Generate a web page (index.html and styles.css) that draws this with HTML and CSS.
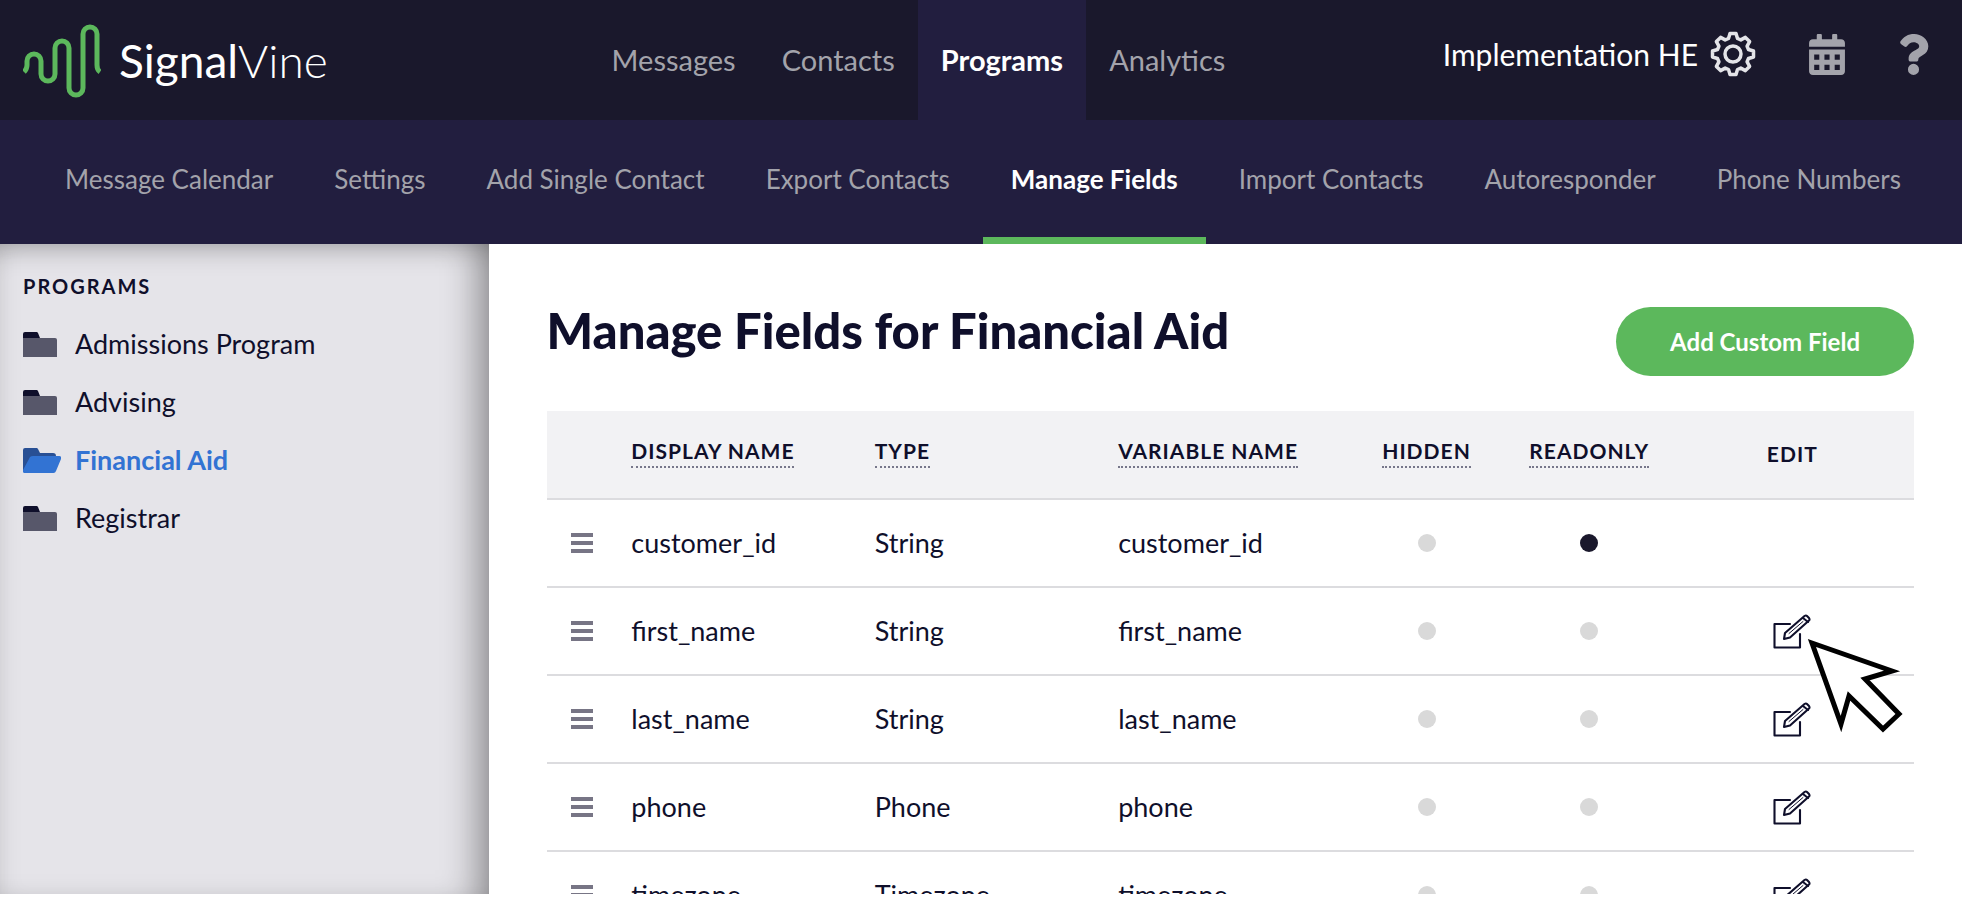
FILE: index.html
```html
<!DOCTYPE html>
<html lang="en">
<head>
  <meta charset="UTF-8" />
  <meta name="viewport" content="width=device-width, initial-scale=1.0"/>
  <title>SignalVine - Manage Fields</title>
  <link rel="stylesheet" href="styles.css">
</head>
<body>

  <!-- shared icons -->
  <svg class="sprite" aria-hidden="true">
    <symbol id="folder" viewBox="0 0 38 25">
      <path d="M0 9V2a2 2 0 0 1 2-2h11a2 2 0 0 1 2 1l2 5v3z" fill="#0f0f2b"/>
      <path d="M0 6h32a2 2 0 0 1 2 2v17H0z" fill="#57576a"/>
    </symbol>
    <symbol id="folder-open" viewBox="0 0 38 25">
      <path d="M0 23V2a2 2 0 0 1 2-2h11a2 2 0 0 1 2 1l2 4h13a3 3 0 0 1 3 3v6z" fill="#284f94"/>
      <path d="M10 8h26a2 2 0 0 1 2 3l-5 12a3 3 0 0 1-3 2H2a2 2 0 0 1-2-3L6 11a4 4 0 0 1 4-3z" fill="#3273d3"/>
    </symbol>
    <symbol id="edit" viewBox="0 0 38 35">
      <g fill="none" stroke="#0f0f2b" stroke-width="2.1" stroke-linecap="round" stroke-linejoin="round">
        <path d="M17 10H1.500V33.500H27V20"/>
        <path d="M11 25l1-6L31.500 2q1.500-1 2.500 0l2 2q1 1.500 0 2.500L17 23.500z"/>
        <path d="M30 4l5 4"/>
        <path d="M16 19.500L30 7.500" stroke-width="1"/>
      </g>
    </symbol>
  </svg>

  <header class="topbar">
    <a class="brand" href="#">
      <svg class="brand-mark" viewBox="0 0 78 74" aria-hidden="true">
        <path d="M1 48q3-3 3-7v-4a7 7 0 0 1 14 0v13a7 7 0 0 0 14 0V24a7 7 0 0 1 14 0v40a7 7 0 0 0 14 0V10a7 7 0 0 1 14 0v31q0 5 3 7" fill="none" stroke="#5cb85c" stroke-width="5"/>
      </svg>
      <span class="brand-name"><b>Signal</b>Vine</span>
    </a>
    <nav class="main-nav">
      <a href="#">Messages</a>
      <a href="#">Contacts</a>
      <a href="#" class="active">Programs</a>
      <a href="#">Analytics</a>
    </nav>
    <div class="tools">
      <a class="account" href="#">Implementation HE
        <svg width="46" height="46" viewBox="-23 -23 46 46" fill="none" stroke="#e4e4e8" stroke-width="3.500" stroke-linejoin="round" aria-hidden="true">
          <circle r="8"/>
          <path d="M-3-20.500H3L4.500-15.500 7.800-14.100 12.400-16.600 16.600-12.400 14.100-7.800 15.500-4.500 20.500-3V3L15.500 4.500 14.100 7.800 16.600 12.400 12.400 16.600 7.800 14.100 4.500 15.500 3 20.500H-3L-4.500 15.500-7.800 14.100-12.400 16.600-16.600 12.400-14.100 7.800-15.500 4.500-20.500 3V-3L-15.500-4.500-14.100-7.800-16.600-12.400-12.400-16.600-7.800-14.100-4.500-15.500Z"/>
        </svg>
      </a>
      <a class="tool" href="#" aria-label="Calendar">
        <svg width="36" height="41" viewBox="0 0 448 512" aria-hidden="true">
          <path fill="currentColor" fill-rule="evenodd" d="M400 64h-48V16c0-9-7-16-16-16h-32c-9 0-16 7-16 16v48H160V16c0-9-7-16-16-16h-32c-9 0-16 7-16 16v48H48C21 64 0 85 0 112v48h448v-48c0-27-21-48-48-48zM0 192h448v272c0 27-21 48-48 48H48c-27 0-48-21-48-48zM64 256v64h64v-64zM192 256v64h64v-64zM320 256v64h64v-64zM64 384v64h64v-64zM192 384v64h64v-64zM320 384v64h64v-64z"/>
        </svg>
      </a>
      <a class="tool" href="#" aria-label="Help">
        <svg width="31" height="41" viewBox="0 0 384 512" aria-hidden="true">
          <path fill="currentColor" d="M202 0C122 0 70 33 30 91c-7 11-5 25 5 33l43 33c10 8 25 6 33-4 25-32 44-50 83-50 31 0 69 20 69 50 0 22-19 34-49 51-36 20-83 44-83 106v10c0 13 11 24 24 24h73c13 0 24-11 24-24v-6c0-43 125-44 125-160C377 66 287 0 202 0zM192 373a69 69 0 1 0 0 139 69 69 0 1 0 0-139z"/>
        </svg>
      </a>
    </div>
  </header>

  <nav class="sub-nav">
    <a href="#">Message Calendar</a>
    <a href="#">Settings</a>
    <a href="#">Add Single Contact</a>
    <a href="#">Export Contacts</a>
    <a href="#" class="active">Manage Fields</a>
    <a href="#">Import Contacts</a>
    <a href="#">Autoresponder</a>
    <a href="#">Phone Numbers</a>
  </nav>

  <div class="page">
    <aside class="sidebar">
      <h2>Programs</h2>
      <ul>
        <li><a href="#"><svg><use href="#folder"/></svg>Admissions Program</a></li>
        <li><a href="#"><svg><use href="#folder"/></svg>Advising</a></li>
        <li><a href="#" class="active"><svg><use href="#folder-open"/></svg>Financial Aid</a></li>
        <li><a href="#"><svg><use href="#folder"/></svg>Registrar</a></li>
      </ul>
    </aside>

    <main class="content">
      <div class="heading">
        <h1>Manage Fields for Financial Aid</h1>
        <button class="add-button" type="button">Add Custom Field</button>
      </div>

      <table class="fields">
        <thead>
          <tr>
            <th class="col-handle"></th>
            <th class="col-text"><span>Display Name</span></th>
            <th class="col-text"><span>Type</span></th>
            <th class="col-variable"><span>Variable Name</span></th>
            <th class="col-flag"><span>Hidden</span></th>
            <th class="col-flag"><span>Readonly</span></th>
            <th class="col-edit">Edit</th>
          </tr>
        </thead>
        <tbody>
          <tr>
            <td><i class="handle"></i></td>
            <td>customer_id</td>
            <td>String</td>
            <td>customer_id</td>
            <td><i class="dot"></i></td>
            <td><i class="dot on"></i></td>
            <td></td>
          </tr>
          <tr>
            <td><i class="handle"></i></td>
            <td>first_name</td>
            <td>String</td>
            <td>first_name</td>
            <td><i class="dot"></i></td>
            <td><i class="dot"></i></td>
            <td>
              <button class="edit" type="button" aria-label="Edit first_name">
                <svg><use href="#edit"/></svg>
                <svg class="pointer" viewBox="0 0 92 93" aria-hidden="true">
                  <path d="M3 3L83 31 56 39 90 74 74 89 40 56 32 84z" fill="#fff" stroke="#000" stroke-width="5"/>
                </svg>
              </button>
            </td>
          </tr>
          <tr>
            <td><i class="handle"></i></td>
            <td>last_name</td>
            <td>String</td>
            <td>last_name</td>
            <td><i class="dot"></i></td>
            <td><i class="dot"></i></td>
            <td><button class="edit" type="button" aria-label="Edit last_name"><svg><use href="#edit"/></svg></button></td>
          </tr>
          <tr>
            <td><i class="handle"></i></td>
            <td>phone</td>
            <td>Phone</td>
            <td>phone</td>
            <td><i class="dot"></i></td>
            <td><i class="dot"></i></td>
            <td><button class="edit" type="button" aria-label="Edit phone"><svg><use href="#edit"/></svg></button></td>
          </tr>
          <tr>
            <td><i class="handle"></i></td>
            <td>timezone</td>
            <td>Timezone</td>
            <td>timezone</td>
            <td><i class="dot"></i></td>
            <td><i class="dot"></i></td>
            <td><button class="edit" type="button" aria-label="Edit timezone"><svg><use href="#edit"/></svg></button></td>
          </tr>
        </tbody>
      </table>
    </main>
  </div>

</body>
</html>
```
FILE: styles.css
```css
* {
  box-sizing: border-box;
}

body {
  margin: 0;
  height: 100vh;
  padding-bottom: 4px;
  display: flex;
  flex-direction: column;
  overflow: hidden;
  background: #fff;
  color: #0f0f2b;
  font-family: Lato, "Open Sans", sans-serif;
  font-size: 27px;
  line-height: 32px;
}

a {
  color: inherit;
  text-decoration: none;
}

.sprite {
  position: absolute;
  width: 0;
  height: 0;
}

/* top bar */
.topbar {
  flex: none;
  display: flex;
  height: 120px;
  background: #1a182c;
  color: #a3a3ab;
}

.brand {
  flex: 0 0 30%;
  display: flex;
  align-items: center;
  gap: 18px;
  padding: 2px 0 0 23px;
  color: #fff;
}

.brand-mark {
  width: 78px;
  height: 74px;
}

.brand-name {
  font-size: 46px;
  font-weight: 300;
}

.main-nav {
  display: flex;
  font-size: 29px;
}

.main-nav a {
  display: flex;
  align-items: center;
  padding: 0 23px;
}

.main-nav .active {
  background: #221e3f;
  color: #fff;
  font-weight: 700;
}

.tools {
  display: flex;
  align-items: center;
  gap: 53px;
  margin-left: auto;
  padding: 0 33px 12px 0;
}

.tools svg {
  display: block;
}

.account {
  display: flex;
  align-items: center;
  gap: 12px;
  color: #fff;
  font-size: 30px;
}

/* second row */
.sub-nav {
  flex: none;
  display: flex;
  justify-content: space-between;
  height: 124px;
  padding: 0 33px 0 37px;
  background: #221e3f;
  color: #a3a3ab;
  font-size: 26px;
  white-space: nowrap;
}

.sub-nav a {
  display: flex;
  align-items: center;
  padding: 0 28px;
  border-top: 1px solid transparent;
  border-bottom: 7px solid transparent;
}

.sub-nav .active {
  border-bottom-color: #5cb85c;
  color: #fff;
  font-weight: 700;
}

.page {
  flex: 1;
  min-height: 0;
  display: flex;
  overflow: hidden;
}

/* program list */
.sidebar {
  flex: 0 0 24.9%;
  padding: 26px 23px;
  background: #e5e4e9;
  box-shadow: inset -30px 0 36px -20px rgba(0, 0, 0, 0.4), inset 0 24px 28px -20px rgba(0, 0, 0, 0.24), inset 14px 0 24px -14px rgba(0, 0, 0, 0.1);
}

.sidebar h2 {
  margin: 0 0 26px;
  font-size: 20px;
  font-weight: 700;
  letter-spacing: 2px;
  text-transform: uppercase;
}

.sidebar ul {
  margin: 0;
  padding: 0;
  list-style: none;
}

.sidebar li {
  margin-bottom: 26px;
}

.sidebar a {
  display: flex;
  align-items: center;
}

.sidebar svg {
  width: 38px;
  height: 25px;
  margin-right: 14px;
}

.sidebar .active {
  color: #3273d3;
  font-weight: 700;
}

/* fields */
.content {
  flex: 1;
  padding: 63px 48px 0 58px;
}

.heading {
  display: flex;
  justify-content: space-between;
  margin-bottom: 35px;
}

h1 {
  margin: 0;
  font-size: 49px;
  font-weight: 900;
  line-height: 46px;
}

.add-button {
  height: 69px;
  padding: 0 54px;
  border: 0;
  border-radius: 35px;
  background: #5cb85c;
  color: #fff;
  font: 700 24px Lato, "Open Sans", sans-serif;
  cursor: pointer;
}

.fields {
  width: 100%;
  table-layout: fixed;
  border-collapse: collapse;
}

.fields tr {
  height: 88px;
  border-bottom: 2px solid #dcdcdf;
}

.fields th {
  padding: 0 0 2px;
  background: #f2f2f4;
  font-size: 21px;
  font-weight: 700;
  line-height: 24px;
  letter-spacing: 1px;
  text-align: left;
  text-transform: uppercase;
}

.fields th span {
  display: inline-block;
  padding-bottom: 3px;
  border-bottom: 2px dotted #77778a;
}

.fields td {
  padding: 0;
}

.col-handle {
  width: 6.2%;
}

.col-text {
  width: 17.8%;
}

.col-flag {
  width: 11.9%;
}

.col-edit {
  width: 17.8%;
}

.fields .col-flag,
.fields .col-edit {
  text-align: center;
}

.handle {
  display: block;
  width: 22px;
  height: 20px;
  margin-left: 24px;
  border-top: 4px solid #777585;
  border-bottom: 4px solid #777585;
  background: linear-gradient(#777585, #777585) center / 100% 4px no-repeat content-box;
}

.dot {
  display: block;
  width: 18px;
  height: 18px;
  margin: 0 auto;
  border-radius: 50%;
  background: #d9d9d9;
}

.dot.on {
  background: #1a182c;
}

.edit {
  display: block;
  position: relative;
  width: 38px;
  height: 35px;
  margin: 0 auto;
  padding: 0;
  border: 0;
  background: none;
  cursor: pointer;
}

.edit svg {
  display: block;
  width: 38px;
  height: 35px;
}

/* mouse pointer over the first edit button */
.edit .pointer {
  position: absolute;
  top: 26px;
  left: 36px;
  z-index: 1;
  width: 92px;
  height: 93px;
  overflow: visible;
}
```
